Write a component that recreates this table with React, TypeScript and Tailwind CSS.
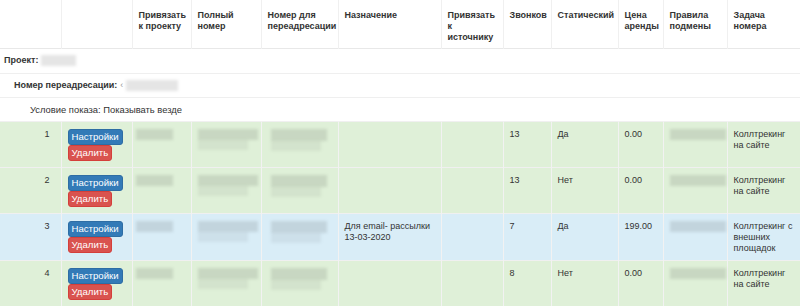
import React from 'react';

type Row = {
  n: number;
  purpose?: string[];
  calls: string;
  isStatic: string;
  price: string;
  task: string[];
  tone: 'green' | 'blue';
};

const rows: Row[] = [
  { n: 1, calls: '13', isStatic: 'Да', price: '0.00', task: ['Коллтрекинг', 'на сайте'], tone: 'green' },
  { n: 2, calls: '13', isStatic: 'Нет', price: '0.00', task: ['Коллтрекинг', 'на сайте'], tone: 'green' },
  { n: 3, purpose: ['Для email- рассылки', '13-03-2020'], calls: '7', isStatic: 'Да', price: '199.00', task: ['Коллтрекинг с', 'внешних', 'площадок'], tone: 'blue' },
  { n: 4, calls: '8', isStatic: 'Нет', price: '0.00', task: ['Коллтрекинг', 'на сайте'], tone: 'green' },
];

const headers = [
  [],
  [],
  ['Привязать', 'к проекту'],
  ['Полный', 'номер'],
  ['Номер для', 'переадресации'],
  ['Назначение'],
  ['Привязать', 'к', 'источнику'],
  ['Звонков'],
  ['Статический'],
  ['Цена', 'аренды'],
  ['Правила', 'подмены'],
  ['Задача', 'номера'],
];

const widths = [61, 71, 59, 70, 77, 103, 62, 48, 67, 45, 64, 73];

// blurred masked value
function Blur({ w, h, light }: { w: number; h: number; light?: boolean }) {
  return (
    <div
      className={`blur-[1.5px] ${light ? 'bg-black/5' : 'bg-black/10'}`}
      style={{ width: w, height: h }}
    />
  );
}

function Lines({ lines }: { lines: string[] }) {
  return (
    <>
      {lines.map((l, i) => (
        <div key={i}>{l}</div>
      ))}
    </>
  );
}

export default function App() {
  const cell = 'border-l border-[#f2f2f2] align-top px-[6px] pt-[7px] pb-[6px]';
  return (
    <div className="w-[800px] h-[306px] overflow-hidden bg-white text-[#333] text-[9px] leading-[11px] font-['Liberation_Sans',Arial,sans-serif]">
      <table className="w-[800px] table-fixed border-collapse">
        <colgroup>
          {widths.map((w, i) => (
            <col key={i} style={{ width: w }} />
          ))}
        </colgroup>
        <thead>
          <tr className="h-[48px] border-b border-[#e8e8e8]">
            {headers.map((h, i) => (
              <th key={i} className={`${i === 0 ? '' : 'border-l border-[#f0f0f0]'} align-top text-left font-bold px-[6px] pt-[10px]`}>
                <Lines lines={h} />
              </th>
            ))}
          </tr>
        </thead>
        <tbody>
          <tr className="h-[25px] border-b border-[#efefef]">
            <td colSpan={12} className="px-[4px] align-middle">
              <div className="flex items-center gap-[3px]">
                <span className="font-bold">Проект:</span>
                <Blur w={35} h={11} />
              </div>
            </td>
          </tr>
          <tr className="h-[24px] border-b border-[#efefef]">
            <td colSpan={12} className="pl-[14px] align-middle">
              <div className="flex items-center gap-[3px]">
                <span className="font-bold">Номер переадресации:</span>
                <span className="text-[#999]">‹</span>
                <Blur w={52} h={11} />
              </div>
            </td>
          </tr>
          <tr className="h-[24px]">
            <td colSpan={12} className="pl-[30px] align-middle text-[9.4px]">
              Условие показа: Показывать везде
            </td>
          </tr>
          {rows.map((r) => (
            <tr
              key={r.n}
              className={`${r.tone === 'green' ? 'bg-[#dff0d8]' : 'bg-[#d9edf7]'} h-[46px] border-t border-[#f0f0f0]`}
            >
              <td className="align-top text-right pr-[11px] pt-[7px]">{r.n}</td>
              <td className={`${cell} pt-[5px] pb-[5px]`}>
                <div className="flex flex-col items-start">
                  <button className="bg-[#337ab7] border border-[#2e6da4] text-white rounded-[3px] px-[3px] h-[16px] text-[9.6px] leading-[14px]">
                    Настройки
                  </button>
                  <button className="bg-[#d9534f] border border-[#d43f3a] text-white rounded-[3px] px-[3px] h-[16px] text-[9.6px] leading-[14px]">
                    Удалить
                  </button>
                </div>
              </td>
              <td className={`${cell} pt-[4px] pl-[3px]`}>
                <Blur w={37} h={11} />
              </td>
              <td className={`${cell} pt-[2px]`}>
                <Blur w={60} h={11} />
                <Blur w={50} h={10} light />
              </td>
              <td className={`${cell} pt-[2px] pl-[9px]`}>
                <Blur w={56} h={12} />
                <Blur w={50} h={10} light />
              </td>
              <td className={cell}>{r.purpose && <Lines lines={r.purpose} />}</td>
              <td className={cell}></td>
              <td className={cell}>{r.calls}</td>
              <td className={cell}>{r.isStatic}</td>
              <td className={cell}>{r.price}</td>
              <td className={`${cell} pt-[4px]`}>
                <Blur w={56} h={11} />
              </td>
              <td className={cell}>
                <Lines lines={r.task} />
              </td>
            </tr>
          ))}
        </tbody>
      </table>
    </div>
  );
}
